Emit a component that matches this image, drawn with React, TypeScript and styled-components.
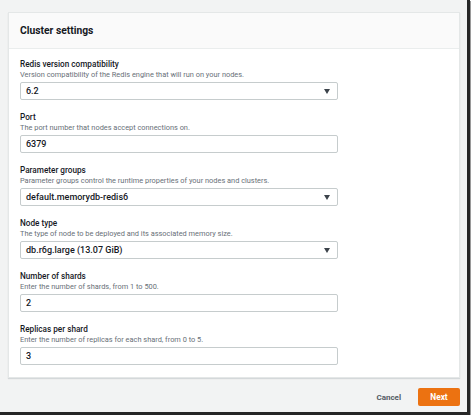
import React from "react";
import styled, { createGlobalStyle } from "styled-components";

const Global = createGlobalStyle`
  html, body { margin: 0; padding: 0; background: #ffffff; }
  body { font-family: Roboto, "Open Sans", Arial, sans-serif; color: #16191f; }
  * { box-sizing: border-box; }
`;

const Frame = styled.div`
  width: 470px;
  height: 415px;
  background: #f2f3f3;
  border-right: 3px solid #262626;
  border-bottom: 3px solid #262626;
  box-shadow: 1px 1px 0 #9a9a9a;
  padding: 12px 7px 0 8px;
  display: flex;
  flex-direction: column;
`;

const Card = styled.section`
  width: 452px;
  background: #ffffff;
  border: 1px solid #e4e7e7;
  box-shadow: 0 1px 1px rgba(0, 27, 43, 0.12);
  display: flex;
  flex-direction: column;
`;

const Header = styled.header`
  height: 36px;
  background: #fafafa;
  border-bottom: 1px solid #eaeded;
  display: flex;
  align-items: center;
  padding: 0 11px;
`;

const Title = styled.h2`
  margin: 0;
  font-size: 10.3px;
  font-weight: 700;
  color: #16191f;
`;

const Body = styled.div`
  padding: 9px 11px 12px;
  display: flex;
  flex-direction: column;
  gap: 11px;
`;

const Field = styled.div`
  display: flex;
  flex-direction: column;
`;

const Label = styled.label`
  font-size: 8.2px;
  line-height: 12px;
  font-weight: 500;
  color: #16191f;
`;

const Desc = styled.div`
  font-size: 7.4px;
  line-height: 10px;
  color: #687078;
`;

const Control = styled.div`
  margin-top: 2px;
  width: 318px;
  height: 18px;
  border: 1px solid #c6cccd;
  border-radius: 2px;
  background: #fff;
  display: flex;
  align-items: center;
  justify-content: space-between;
  padding: 0 7px 0 5px;
  font-size: 9px;
  font-weight: 500;
  color: #16191f;
`;

const Caret = styled.svg`
  width: 6px;
  height: 5px;
  flex: none;
`;

const Footer = styled.footer`
  display: flex;
  justify-content: flex-end;
  align-items: center;
  gap: 17px;
  margin-top: 10px;
  width: 452px;
`;

const TextButton = styled.button`
  border: none;
  background: none;
  font-family: inherit;
  font-size: 8px;
  font-weight: 700;
  color: #545b64;
  padding: 0;
`;

const PrimaryButton = styled.button`
  border: none;
  border-radius: 2px;
  background: #ec7211;
  color: #fff;
  font-family: inherit;
  font-size: 8.3px;
  font-weight: 700;
  width: 42px;
  height: 18px;
  padding: 0;
`;

type FieldDef = { label: string; desc: string; value: string; select?: boolean };

const fields: FieldDef[] = [
  { label: "Redis version compatibility", desc: "Version compatibility of the Redis engine that will run on your nodes.", value: "6.2", select: true },
  { label: "Port", desc: "The port number that nodes accept connections on.", value: "6379" },
  { label: "Parameter groups", desc: "Parameter groups control the runtime properties of your nodes and clusters.", value: "default.memorydb-redis6", select: true },
  { label: "Node type", desc: "The type of node to be deployed and its associated memory size.", value: "db.r6g.large (13.07 GiB)", select: true },
  { label: "Number of shards", desc: "Enter the number of shards, from 1 to 500.", value: "2" },
  { label: "Replicas per shard", desc: "Enter the number of replicas for each shard, from 0 to 5.", value: "3" },
];

export default function App() {
  return (
    <>
      <Global />
      <Frame>
        <Card>
          <Header>
            <Title>Cluster settings</Title>
          </Header>
          <Body>
            {fields.map((f) => (
              <Field key={f.label}>
                <Label>{f.label}</Label>
                <Desc>{f.desc}</Desc>
                <Control>
                  <span>{f.value}</span>
                  {f.select && (
                    <Caret viewBox="0 0 6 5">
                      <path d="M0 0h6L3 5z" fill="#3c434b" />
                    </Caret>
                  )}
                </Control>
              </Field>
            ))}
          </Body>
        </Card>
        <Footer>
          <TextButton>Cancel</TextButton>
          <PrimaryButton>Next</PrimaryButton>
        </Footer>
      </Frame>
    </>
  );
}
